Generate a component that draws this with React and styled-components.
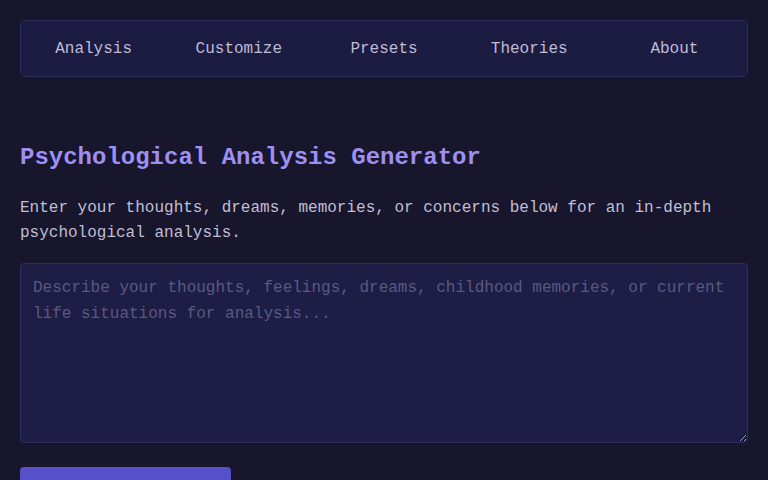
import React from "react";
import styled, { createGlobalStyle } from "styled-components";

const GlobalStyle = createGlobalStyle`
  html, body {
    margin: 0;
    padding: 0;
    background: #17162d;
  }
  * {
    box-sizing: border-box;
  }
`;

const Page = styled.div`
  padding: 20px;
  font-family: "Liberation Mono", "Courier New", monospace;
  color: #c9c8dc;
  min-height: 100vh;
`;

const Nav = styled.nav`
  display: flex;
  height: 57px;
  align-items: center;
  background: #1c1b42;
  border: 1px solid #2e2c5e;
  border-radius: 6px;
`;

const NavLink = styled.a`
  flex: 1;
  text-align: center;
  font-size: 16px;
  color: #bebdd6;
  text-decoration: none;
  cursor: pointer;
`;

const Main = styled.main`
  padding-top: 67px;
`;

const Title = styled.h1`
  margin: 0 0 25px;
  font-size: 24px;
  line-height: 27px;
  font-weight: bold;
  color: #9d90f2;
`;

const Intro = styled.p`
  margin: 0 0 17px;
  font-size: 16px;
  line-height: 25px;
  color: #c0bfd3;
`;

const Entry = styled.textarea`
  display: block;
  width: 100%;
  height: 180px;
  padding: 11px 12px;
  background: #1e1d45;
  border: 1px solid #2f2d60;
  border-radius: 4px;
  color: #d0cfe6;
  font-family: inherit;
  font-size: 16px;
  line-height: 26px;
  resize: vertical;
  outline: none;

  &::placeholder {
    color: #5a5982;
  }
`;

const AnalyzeButton = styled.button`
  margin-top: 24px;
  width: 211px;
  padding: 18px 0;
  background: #5650c9;
  border: none;
  border-radius: 4px;
  color: #ffffff;
  font-family: inherit;
  font-size: 16px;
  cursor: pointer;
`;

const links = ["Analysis", "Customize", "Presets", "Theories", "About"];

const App = () => {
  return (
    <Page>
      <GlobalStyle />
      <Nav>
        {links.map((label) => (
          <NavLink key={label}>{label}</NavLink>
        ))}
      </Nav>
      <Main>
        <Title>Psychological Analysis Generator</Title>
        <Intro>
          Enter your thoughts, dreams, memories, or concerns below for an in-depth
          psychological analysis.
        </Intro>
        <Entry placeholder="Describe your thoughts, feelings, dreams, childhood memories, or current life situations for analysis..." />
        <AnalyzeButton>Generate Analysis</AnalyzeButton>
      </Main>
    </Page>
  );
};

export default App;
